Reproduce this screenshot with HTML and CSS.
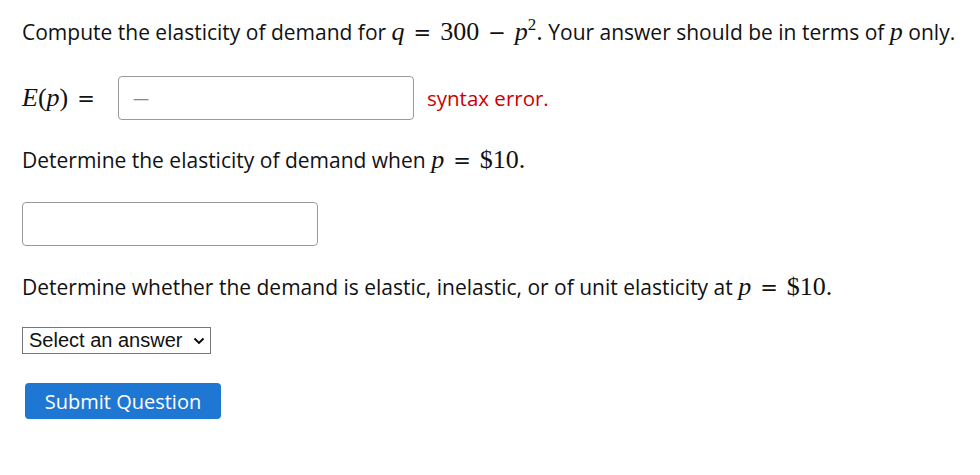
FILE: index.html
```html
<!DOCTYPE html>
<html>
<head>
<meta charset="utf-8">
<link rel="stylesheet" href="styles.css">
</head>
<body>
<div class="question">
  <p class="line first">Compute the elasticity of demand for <span class="m"><i>q</i><span class="op">=</span>300<span class="op">−</span><i>p</i><sup>2</sup>.</span> Your answer should be in terms of <span class="m"><i>p</i></span> only.</p>
  <div class="row">
    <span class="m lhs"><i>E</i>(<i>p</i>)<span class="op">=</span></span>
    <div class="box"><span class="dash">—</span></div>
    <span class="err">syntax error.</span>
  </div>
  <p class="line second">Determine the elasticity of demand when <span class="m"><i>p</i><span class="op">=</span>$10.</span></p>
  <div class="box solo"></div>
  <p class="line third">Determine whether the demand is elastic, inelastic, or of unit elasticity at <span class="m"><i>p</i><span class="op">=</span>$10.</span></p>
  <div class="select">Select an answer <svg width="12" height="8" viewBox="0 0 12 8"><path d="M1.5 1.5 L6 6 L10.5 1.5" fill="none" stroke="#000" stroke-width="1.8"/></svg></div>
  <button class="submit">Submit Question</button>
</div>
</body>
</html>
```
FILE: styles.css
```css
body {
  margin: 0;
  background: #fff;
  font-family: "Open Sans", sans-serif;
  color: #111;
}
.question {
  padding: 0 22px;
}
.line {
  margin: 0;
  font-size: 21px;
  line-height: 26px;
  height: 26px;
  white-space: nowrap;
}
.first { margin-top: 19px; }
.m {
  font-family: "Liberation Serif", "DejaVu Serif", serif;
  font-size: 26px;
  line-height: 0;
}
.m sup { font-size: 17px; line-height: 0; vertical-align: 10px; }
.op {
  font-family: "DejaVu Sans", sans-serif;
  font-size: 21px;
  margin: 0 9px;
}
.row {
  display: flex;
  align-items: center;
  margin-top: 31px;
  height: 44px;
}
.lhs { width: 96px; line-height: 26px; }
.box {
  width: 294px;
  height: 42px;
  border: 1px solid #9a9a9a;
  border-radius: 4px;
  display: flex;
  align-items: center;
}
.dash { color: #888; margin-left: 14px; font-size: 16px; }
.err { color: #c00; font-size: 20.5px; margin-left: 13px; }
.second { margin-top: 27px; }
.solo { margin-top: 29px; }
.third { margin-top: 28px; }
.select {
  margin-top: 27px;
  display: inline-flex;
  align-items: center;
  gap: 11px;
  border: 1px solid #767676;
  padding: 0 5px 0 6px;
  font-family: "Liberation Sans", Arial, sans-serif;
  font-size: 20px;
  height: 25px;
}
.submit {
  display: block;
  margin-top: 29px;
  margin-left: 3px;
  width: 196px;
  height: 36px;
  background: #1f77d4;
  color: #fff;
  border: none;
  border-radius: 4px;
  font-family: "Open Sans", sans-serif;
  font-size: 20px;
}
```
